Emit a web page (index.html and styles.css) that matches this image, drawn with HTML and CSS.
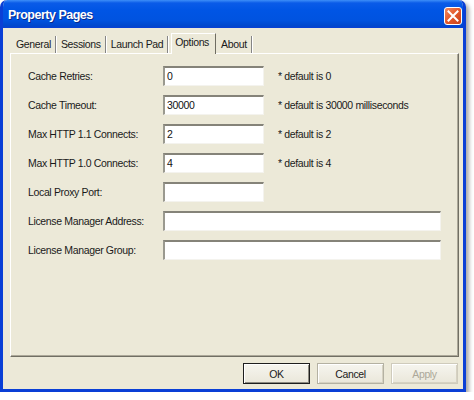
FILE: index.html
```html
<!DOCTYPE html>
<html>
<head>
<meta charset="utf-8">
<link rel="stylesheet" href="styles.css">
</head>
<body>
<div class="window">
  <div class="titlebar">
    <span class="title">Property Pages</span>
    <span class="close"><svg width="12" height="12" viewBox="0 0 12 12"><path d="M1.5 1.5 L10.5 10.5 M10.5 1.5 L1.5 10.5" stroke="#fff" stroke-width="2" stroke-linecap="square"/></svg></span>
  </div>
  <div class="content">
    <div class="tabs">
      <span class="tab">General</span>
      <span class="tab">Sessions</span>
      <span class="tab">Launch Pad</span>
      <span class="tab selected">Options</span>
      <span class="tab last">About</span>
    </div>
    <div class="panel">
      <div class="form">
        <label class="label">Cache Retries:</label>
        <div class="input short">0</div>
        <span class="hint">* default is 0</span>

        <label class="label">Cache Timeout:</label>
        <div class="input short">30000</div>
        <span class="hint">* default is 30000 milliseconds</span>

        <label class="label">Max HTTP 1.1 Connects:</label>
        <div class="input short">2</div>
        <span class="hint">* default is 2</span>

        <label class="label">Max HTTP 1.0 Connects:</label>
        <div class="input short">4</div>
        <span class="hint">* default is 4</span>

        <label class="label">Local Proxy Port:</label>
        <div class="input short"></div>
        <span class="hint"></span>

        <label class="label">License Manager Address:</label>
        <div class="input long"></div>

        <label class="label">License Manager Group:</label>
        <div class="input long"></div>
      </div>
    </div>
    <div class="buttons">
      <span class="btn default">OK</span>
      <span class="btn">Cancel</span>
      <span class="btn disabled">Apply</span>
    </div>
  </div>
</div>
</body>
</html>
```

FILE: styles.css
```css
html, body {
  margin: 0;
  padding: 0;
  background: #ffffff;
}

body {
  font-family: "Liberation Sans", Arial, sans-serif;
  font-size: 10.5px;
  letter-spacing: -0.35px;
  color: #1a1a1a;
}

.window {
  width: 466px;
  height: 392px;
  box-sizing: border-box;
  background: #ECE9D8;
  border: 3px solid #0A3FD6;
  border-top: none;
  border-radius: 7px 7px 0 0;
  box-shadow: 3px 3px 4px rgba(0, 0, 0, 0.35);
  display: flex;
  flex-direction: column;
  overflow: hidden;
}

.titlebar {
  height: 28px;
  margin: 0 -3px;
  flex: none;
  display: flex;
  align-items: center;
  justify-content: space-between;
  padding: 0 4px 0 8px;
  border-radius: 7px 7px 0 0;
  background: linear-gradient(to bottom, #3D8EF8 0px, #0A5BE8 3px, #0055E5 10px, #0053E0 20px, #0047CC 26px, #0A3FD6 28px);
}

.title {
  color: #ffffff;
  font-family: "Liberation Sans", Arial, sans-serif;
  font-weight: bold;
  font-size: 12.5px;
  letter-spacing: -0.5px;
  text-shadow: 1px 1px 0 #0A2A8A;
  padding-top: 2px;
}

.close {
  width: 18px;
  height: 18px;
  box-sizing: border-box;
  border: 1px solid #ffffff;
  border-radius: 3px;
  background: linear-gradient(135deg, #F08A60 0%, #E2582A 50%, #C8401A 100%);
  display: flex;
  align-items: center;
  justify-content: center;
  margin-top: 4px;
}

.content {
  flex: 1;
  display: flex;
  flex-direction: column;
  padding: 6px 4px 0 7px;
}

.tabs {
  display: flex;
  align-items: flex-end;
  height: 19px;
  padding-left: 2px;
  position: relative;
  z-index: 1;
}

.tab {
  height: 17px;
  line-height: 16px;
  padding: 0 4px 0 4px;
  border-right: 1px solid #858585;
  box-shadow: 1px 0 0 #ffffff;
  margin-right: 1px;
  white-space: nowrap;
}

.tab.selected {
  height: 21px;
  line-height: 17px;
  margin-left: 2px;
  margin-bottom: -1px;
  padding: 0 6px 2px 3px;
  border-left: 1px solid #ffffff;
  border-top: 1px solid #ffffff;
  border-right: 1px solid #6F6D62;
  box-shadow: none;
  background: #ECE9D8;
  box-sizing: border-box;
}

.panel {
  height: 304px;
  box-sizing: border-box;
  border-top: 1px solid #ffffff;
  border-left: 1px solid #ffffff;
  border-right: 1px solid #716F64;
  border-bottom: 1px solid #716F64;
  box-shadow: inset -1px -1px 0 #ACA899;
  padding: 12px 0 0 17px;
}

.form {
  display: grid;
  grid-template-columns: 135px 101px auto;
  grid-auto-rows: 20px;
  row-gap: 9px;
  align-items: center;
}

.label {
  white-space: nowrap;
}

.input {
  height: 20px;
  box-sizing: border-box;
  background: #ffffff;
  border-style: solid;
  border-width: 2px 1px 1px 2px;
  border-color: #858379 #F4F3EE #F4F3EE #9A998F;
  padding: 1px 2px;
  line-height: 14px;
  color: #111;
}

.input.short {
  width: 101px;
}

.input.long {
  grid-column: 2 / 4;
  width: 278px;
}

.hint {
  padding-left: 14px;
  white-space: nowrap;
}

.buttons {
  display: flex;
  justify-content: flex-end;
  gap: 7px;
  padding: 6px 1px 0 0;
}

.btn {
  width: 67px;
  height: 21px;
  box-sizing: border-box;
  display: flex;
  align-items: center;
  justify-content: center;
  background: linear-gradient(to bottom, #F6F5EF, #EAE7DA);
  border: 1px solid #B4B1A2;
  box-shadow: inset 1px 1px 0 #ffffff, inset -1px -1px 0 #D6D2C2;
}

.btn.default {
  border: 1px solid #1E1E1E;
  box-shadow: inset 1px 1px 0 #ffffff, inset -1px -1px 0 #8C8A80;
}

.btn.disabled {
  color: #ACA899;
  border-color: #CFCBBC;
}
```
